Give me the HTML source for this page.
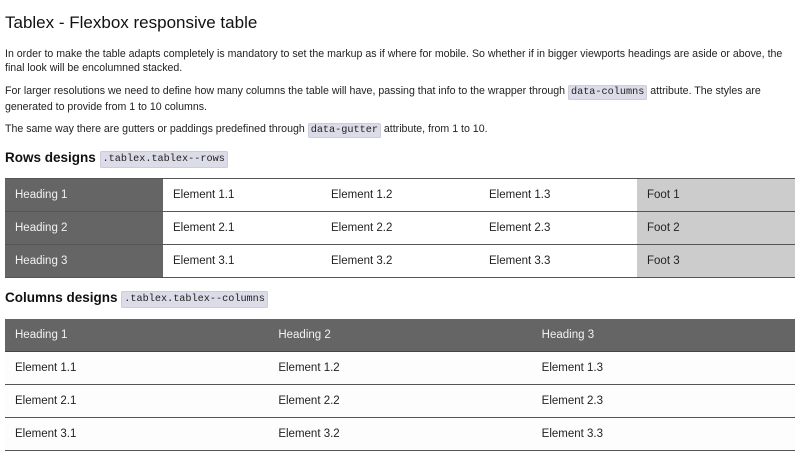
<!DOCTYPE html>
<html><head><meta charset="utf-8"><style>
*{margin:0;padding:0;box-sizing:border-box}
body{width:800px;height:450px;overflow:hidden;background:#fff;color:#222;font-family:"Liberation Sans",sans-serif;font-size:11.5px;position:relative}
.a{position:absolute;white-space:nowrap}
.p{font-size:10.6px}
h1{font-size:17px;font-weight:normal;color:#111}
h2{font-size:13.5px;font-weight:bold;color:#111}
code{font-family:"Liberation Mono",monospace;font-size:10.2px;background:#dcdce8;border:1px solid #ccd;border-radius:2px;padding:1px 2px;font-weight:normal;color:#222}
h2 code{font-size:10.2px;padding:2px 2px;vertical-align:1px}
.t{position:absolute;left:5px;width:790px}
.r{display:flex;height:33px;border-bottom:1px solid #555}
.r div{line-height:32px;padding-left:10px}
.rows .r div{width:158px}
.h{background:#656565;color:#f2f2f2}
.f{background:#ccc}
.cols .r div{width:263.33px}
.cols .r{background:#fdfdfd}
.cols .r.hd{background:#656565;color:#f2f2f2;border-bottom:1px solid #444}
</style></head><body>
<h1 class="a" style="left:5px;top:13px">Tablex - Flexbox responsive table</h1>
<div class="a p" style="left:5px;top:47px;line-height:14px">In order to make the table adapts completely is mandatory to set the markup as if where for mobile. So whether if in bigger viewports headings are aside or above, the<br>final look will be encolumned stacked.</div>
<div class="a p" style="left:5px;top:84px;line-height:15px">For larger resolutions we need to define how many columns the table will have, passing that info to the wrapper through <code>data-columns</code> attribute. The styles are<br>generated to provide from 1 to 10 columns.</div>
<div class="a p" style="left:5px;top:123px">The same way there are gutters or paddings predefined through <code>data-gutter</code> attribute, from 1 to 10.</div>
<h2 class="a" style="left:5px;top:150px">Rows designs <code>.tablex.tablex--rows</code></h2>
<div class="t rows" style="top:178px;border-top:1px solid #555">
<div class="r"><div class="h">Heading 1</div><div>Element 1.1</div><div>Element 1.2</div><div>Element 1.3</div><div class="f">Foot 1</div></div>
<div class="r"><div class="h">Heading 2</div><div>Element 2.1</div><div>Element 2.2</div><div>Element 2.3</div><div class="f">Foot 2</div></div>
<div class="r"><div class="h">Heading 3</div><div>Element 3.1</div><div>Element 3.2</div><div>Element 3.3</div><div class="f">Foot 3</div></div>
</div>
<h2 class="a" style="left:5px;top:290px">Columns designs <code>.tablex.tablex--columns</code></h2>
<div class="t cols" style="top:319px">
<div class="r hd"><div>Heading 1</div><div>Heading 2</div><div>Heading 3</div></div>
<div class="r"><div>Element 1.1</div><div>Element 1.2</div><div>Element 1.3</div></div>
<div class="r"><div>Element 2.1</div><div>Element 2.2</div><div>Element 2.3</div></div>
<div class="r"><div>Element 3.1</div><div>Element 3.2</div><div>Element 3.3</div></div>
</div>
</body></html>
